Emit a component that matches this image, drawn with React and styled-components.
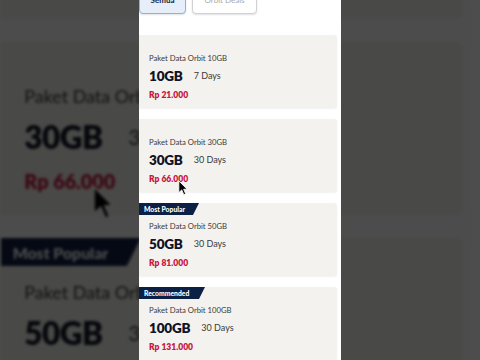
import React from "react";
import styled, { createGlobalStyle } from "styled-components";

const GlobalStyle = createGlobalStyle`
  html, body { margin: 0; padding: 0; background: #4a4a4a; }
  body { font-family: "Lato", "Open Sans", sans-serif; }
`;

const plans = [
  { name: "Paket Data Orbit 10GB", size: "10GB", days: "7 Days", price: "Rp 21.000" },
  { name: "Paket Data Orbit 30GB", size: "30GB", days: "30 Days", price: "Rp 66.000" },
  { name: "Paket Data Orbit 50GB", size: "50GB", days: "30 Days", price: "Rp 81.000", badge: "Most Popular" },
  { name: "Paket Data Orbit 100GB", size: "100GB", days: "30 Days", price: "Rp 131.000", badge: "Recommended" },
];

const Stage = styled.div`
  position: relative;
  width: 480px;
  height: 360px;
  overflow: hidden;
  background: #4d4d4d;
  display: grid;
  grid-template-columns: 139px 202px 1fr;
`;

const Backdrop = styled.div`
  position: absolute;
  inset: 0;
  overflow: hidden;
  pointer-events: none;
`;

const Scaled = styled.div`
  position: absolute;
  left: 1px;
  top: -235px;
  transform: scale(2.33);
  transform-origin: 0 0;
  filter: brightness(0.3) blur(0.75px);
`;

const Screen = styled.div`
  position: relative;
  grid-column: 2;
  width: 202px;
  height: ${(p) => p.$h || 360}px;
  background: #ffffff;
  overflow: hidden;
`;

const Tabs = styled.div`
  display: flex;
  gap: 6px;
  margin-top: -14px;
  height: 28px;
`;

const Tab = styled.div`
  box-sizing: border-box;
  height: 28px;
  width: ${(p) => p.$w}px;
  border-radius: 4px;
  border: 1px solid ${(p) => (p.$active ? "#8fb0e0" : "#d2d2d2")};
  background: ${(p) => (p.$active ? "#e6eefa" : "#ffffff")};
  color: ${(p) => (p.$active ? "#0b1f45" : "#a8a8a8")};
  font-weight: ${(p) => (p.$active ? 700 : 400)};
  font-size: 8px;
  line-height: 26px;
  text-align: center;
  box-shadow: 0 1px 2px rgba(0, 0, 0, 0.12);
`;

const List = styled.div`
  display: flex;
  flex-direction: column;
  gap: 11px;
  margin-top: 21px;
  padding-right: 4px;
`;

const Card = styled.div`
  position: relative;
  box-sizing: border-box;
  height: 73px;
  padding: 17px 10px 0;
  background: #f3f2ee;
  border-radius: 0 3px 3px 0;
  box-shadow: 0 1px 2px rgba(0, 0, 0, 0.06);
`;

const Badge = styled.div`
  position: absolute;
  left: 0;
  top: 0;
  height: 12px;
  width: ${(p) => p.$w}px;
  box-sizing: border-box;
  padding-left: 5px;
  background: #0c1f44;
  color: #ffffff;
  font-size: 6.8px;
  font-weight: 900;
  line-height: 12px;
  clip-path: polygon(0 0, 100% 0, calc(100% - 6px) 100%, 0 100%);
`;

const Title = styled.div`
  font-size: 7.7px;
  line-height: 12px;
  color: #3a3a3a;
`;

const SizeRow = styled.div`
  display: flex;
  align-items: center;
  gap: 11px;
  margin-top: 5px;
  height: 14px;
`;

const Size = styled.span`
  font-size: 13.5px;
  line-height: 14px;
  font-weight: 800;
  color: #101426;
  letter-spacing: -0.2px;
`;

const Days = styled.span`
  font-size: 9px;
  line-height: 14px;
  color: #3a3a3a;
`;

const Price = styled.div`
  margin-top: 6px;
  font-size: 8.5px;
  line-height: 12px;
  font-weight: 800;
  color: #c8153f;
`;

const Pointer = styled.svg`
  position: absolute;
  left: 39px;
  top: 180px;
  width: 10px;
  height: 16px;
`;

const Cursor = () => (
  <Pointer viewBox="0 0 12 19">
    <path d="M1 1 L1 15 L4.5 11.8 L7 17.5 L9.2 16.5 L6.8 11 L11 11 Z" fill="#000" stroke="#fff" strokeWidth="1" strokeLinejoin="round" />
  </Pointer>
);

const PhoneContent = ({ h }) => (
  <Screen $h={h}>
    <Tabs>
      <Tab $active $w={47}>Semua</Tab>
      <Tab $w={65}>Orbit Deals</Tab>
    </Tabs>
    <List>
      {plans.map((p) => (
        <Card key={p.name}>
          {p.badge && <Badge $w={p.badge === "Recommended" ? 66 : 60}>{p.badge}</Badge>}
          <Title>{p.name}</Title>
          <SizeRow>
            <Size>{p.size}</Size>
            <Days>{p.days}</Days>
          </SizeRow>
          <Price>{p.price}</Price>
        </Card>
      ))}
    </List>
    <Cursor />
  </Screen>
);

export default function App() {
  return (
    <>
      <GlobalStyle />
      <Stage>
        <Backdrop>
          <Scaled>
            <PhoneContent h={420} />
          </Scaled>
        </Backdrop>
        <PhoneContent />
      </Stage>
    </>
  );
}
